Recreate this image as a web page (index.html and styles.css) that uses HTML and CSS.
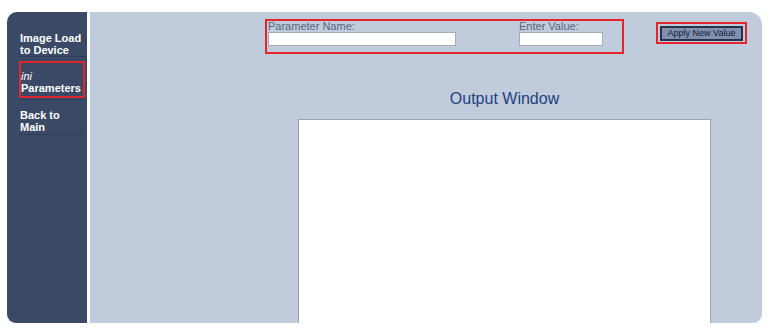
FILE: index.html
```html
<!DOCTYPE html>
<html>
<head>
<meta charset="utf-8">
<link rel="stylesheet" href="styles.css">
</head>
<body>
<div class="frame">
  <nav class="sidebar">
    <div class="nav-item first">Image Load to Device</div>
    <div class="nav-item current"><div class="hl"><i>ini</i><br>Parameters</div></div>
    <div class="nav-item">Back to Main</div>
  </nav>
  <main class="main">
    <div class="top">
      <form class="param-form">
        <div class="field name-field">
          <label class="lbl">Parameter Name:</label>
          <input class="inp inp-name" type="text">
        </div>
        <div class="field value-field">
          <label class="lbl">Enter Value:</label>
          <input class="inp inp-value" type="text">
        </div>
      </form>
      <div class="apply-wrap"><button class="apply" type="button">Apply New Value</button></div>
    </div>
    <section class="output">
      <h2 class="out-title">Output Window</h2>
      <div class="out-box"></div>
    </section>
  </main>
</div>
</body>
</html>
```
FILE: styles.css
```css
html, body { margin: 0; padding: 0; background: #ffffff; }
body { font-family: "Liberation Sans", Arial, sans-serif; }
.frame {
  margin: 12px 6px 0 7px;
  height: 311px;
  display: flex;
  background: #c0ccdc;
  border-radius: 10px 13px 9px 9px;
  overflow: hidden;
}
.sidebar {
  flex: none;
  width: 83px;
  background: #3a4966;
  border-right: 3px solid #ffffff;
  padding: 9px 0 0 12px;
  box-sizing: border-box;
}
.nav-item {
  width: 66px;
  color: #ffffff;
  font-weight: bold;
  font-size: 11px;
  line-height: 12px;
  padding: 9px 0 1px 1px;
  border-bottom: 1px solid #2f3d57;
  box-sizing: border-box;
}
.nav-item.first { padding: 11px 0 0 1px; }
.nav-item.current { padding: 4px 0 1px 0; }
.hl {
  border: 2px solid #e0282c;
  padding: 7px 0 2px 0;
}
.hl i { font-weight: normal; }
.main { flex: 1; }
.top { display: flex; align-items: flex-start; padding-top: 7px; }
.param-form {
  margin: 0 0 0 175px;
  width: 359px;
  height: 35px;
  box-sizing: border-box;
  border: 2px solid #e3262b;
  display: flex;
  padding: 0 0 0 1px;
}
.field { display: flex; flex-direction: column; }
.value-field { margin-left: 63px; }
.lbl {
  color: #56647f;
  font-size: 11px;
  line-height: 10px;
  height: 10px;
  padding-top: 0;
  margin-bottom: 1px;
}
.inp {
  margin: 0;
  height: 14px;
  box-sizing: border-box;
  border: 1px solid #a3abb6;
  background: #ffffff;
  padding: 0;
}
.inp-name { width: 188px; }
.inp-value { width: 84px; }
.apply-wrap {
  margin: 3px 0 0 32px;
  width: 91px;
  height: 22px;
  box-sizing: border-box;
  border: 2px solid #e3262b;
  display: flex;
  align-items: center;
  justify-content: center;
}
.apply {
  width: 83px;
  height: 15px;
  padding: 0;
  background: #8090b0;
  border: 2px solid #26324a;
  font-family: "Liberation Sans", Arial, sans-serif;
  font-size: 9px;
  color: #101a30;
  line-height: 10px;
}
.output { margin: 36px 0 0 208px; width: 413px; }
.out-title {
  margin: 0;
  text-align: center;
  font-weight: normal;
  font-size: 16px;
  line-height: 18px;
  color: #1f3f7d;
  height: 29px;
}
.out-box {
  height: 220px;
  background: #ffffff;
  border: 1px solid #9ba4b1;
  box-sizing: border-box;
}
```
